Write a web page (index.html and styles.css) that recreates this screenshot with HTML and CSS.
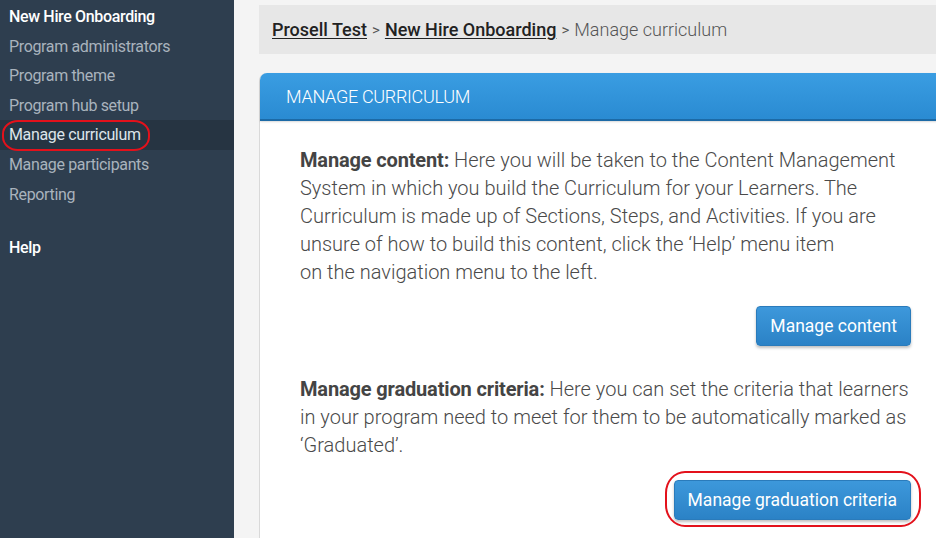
FILE: index.html
```html
<!DOCTYPE html>
<html lang="en">
<head>
<meta charset="utf-8">
<title>Manage curriculum</title>
<link rel="stylesheet" href="styles.css">
</head>
<body>
<div class="app">
  <nav class="sidebar">
    <div class="nav-item nav-head">New Hire Onboarding</div>
    <div class="nav-item">Program administrators</div>
    <div class="nav-item">Program theme</div>
    <div class="nav-item">Program hub setup</div>
    <div class="nav-item active"><span class="mark mark-nav"></span>Manage curriculum</div>
    <div class="nav-item">Manage participants</div>
    <div class="nav-item">Reporting</div>
    <div class="nav-item nav-head nav-help">Help</div>
  </nav>
  <main class="main">
    <div class="breadcrumb">
      <a class="crumb-link">Prosell Test</a><span class="sep">&gt;</span><a class="crumb-link">New Hire Onboarding</a><span class="sep">&gt;</span><span class="crumb-current">Manage curriculum</span>
    </div>
    <section class="panel">
      <header class="panel-header">MANAGE CURRICULUM</header>
      <div class="panel-body">
        <p class="desc"><strong>Manage content:</strong> Here you will be taken to the Content Management System in which you build the Curriculum for your Learners. The Curriculum is made up of Sections, Steps, and Activities. If you are unsure of how to build this content, click the ‘Help’ menu item<br>on the navigation menu to the left.</p>
        <div class="actions actions-first">
          <button class="btn">Manage content</button>
        </div>
        <p class="desc"><strong>Manage graduation criteria:</strong> Here you can set the criteria that learners in your program need to meet for them to be automatically marked as ‘Graduated’.</p>
        <div class="actions actions-second">
          <span class="btn-wrap"><span class="mark mark-btn"></span><button class="btn">Manage graduation criteria</button></span>
        </div>
      </div>
    </section>
  </main>
</div>
</body>
</html>
```
FILE: styles.css
```css
html, body {
  margin: 0;
  padding: 0;
  height: 100%;
  overflow: hidden;
}
body {
  font-family: Roboto, "Liberation Sans", Arial, sans-serif;
  background: #f4f4f4;
}
.app {
  display: flex;
  height: 538px;
}
.sidebar {
  width: 234px;
  flex: none;
  background: #2e3e4f;
  padding-top: 2px;
  box-sizing: border-box;
}
.nav-item {
  position: relative;
  height: 29.6px;
  line-height: 29.6px;
  padding-left: 9px;
  font-size: 16px;
  color: #a9b3bd;
  letter-spacing: -0.35px;
  white-space: nowrap;
}
.nav-head {
  color: #ffffff;
  font-weight: 500;
}
.nav-help {
  margin-top: 24px;
}
.active {
  background: #263442;
  color: #dde4ea;
}
.mark {
  position: absolute;
  border: 2px solid #e3111b;
  pointer-events: none;
}
.mark-nav {
  left: 2px;
  top: 0;
  width: 144px;
  height: 27px;
  border-radius: 16px / 14px;
}
.main {
  flex: 1;
  min-width: 0;
  padding: 5px 0 0 25px;
  margin-right: -20px;
  display: flex;
  flex-direction: column;
}
.breadcrumb {
  height: 49px;
  flex: none;
  background: #e7e7e7;
  padding-left: 13px;
  display: flex;
  align-items: center;
  font-size: 18px;
  color: #555;
}
.crumb-link {
  color: #222;
  font-weight: 500;
  text-decoration: underline;
  text-underline-offset: 2px;
}
.sep {
  margin: 0 5px;
  font-size: 15px;
  color: #555;
}
.crumb-current {
  color: #555;
  font-weight: 300;
}
.panel {
  flex: 1;
  margin-top: 19px;
  background: #fff;
  border-left: 1px solid #d9d9d9;
  border-top-left-radius: 8px;
}
.panel-header {
  height: 46px;
  display: flex;
  align-items: center;
  padding-left: 26px;
  background: linear-gradient(#3a9de2, #2a8bd2);
  border-bottom: 2px solid #1c6aa6;
  border-top-left-radius: 7px;
  color: #fff;
  font-size: 18px;
  font-weight: 300;
  letter-spacing: -0.3px;
  box-shadow: 0 1px 2px rgba(0,0,0,0.15);
}
.panel-body {
  padding: 25px 44px 20px 40px;
  width: 612px;
}
.desc {
  margin: 0;
  font-size: 20px;
  line-height: 28px;
  font-weight: 300;
  color: #4a4a4a;
}
.desc strong {
  font-weight: 700;
  color: #444;
  letter-spacing: -0.15px;
}
.actions {
  display: flex;
  justify-content: flex-end;
}
.actions-first {
  margin: 20px 1px 29px 0;
}
.actions-second {
  margin: 21px 1px 0 0;
}
.btn-wrap {
  position: relative;
  display: inline-block;
}
.mark-btn {
  left: -9px;
  top: -9px;
  width: 252px;
  height: 52px;
  border-radius: 20px / 22px;
}
.btn {
  height: 40px;
  padding: 0 13px;
  border: 1px solid #2a7bbb;
  border-radius: 4px;
  background: linear-gradient(#3d98db, #2b82c6);
  color: #fff;
  font-family: Roboto, "Liberation Sans", Arial, sans-serif;
  font-size: 17.5px;
  box-shadow: 0 2px 3px rgba(0,0,0,0.25);
}
```
